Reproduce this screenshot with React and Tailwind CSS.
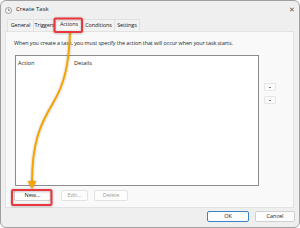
import React from "react";

const font = { fontFamily: '"Open Sans", "Noto Sans", sans-serif' };

function Btn({ children, className = "", disabled = false }) {
  return (
    <div
      className={`flex items-center justify-center h-[11px] rounded-[2px] border bg-[#fdfdfd] text-[5.5px] leading-none ${
        disabled ? "border-[#e2e2e2] text-[#a0a0a0]" : "border-[#d0d0d0] text-[#1a1a1a]"
      } ${className}`}
    >
      {children}
    </div>
  );
}

export default function App() {
  return (
    <div className="w-[300px] h-[228px] bg-white" style={font}>
      <div className="relative w-[300px] h-[228px] rounded-[6px] border border-[#a0a0a0] bg-[#efefef] flex flex-col overflow-hidden">
        {/* Title bar */}
        <div className="h-[17px] flex items-center pl-[4px] pr-[4px] shrink-0">
          <svg width="7" height="7" viewBox="0 0 10 10" className="mt-[1px]">
            <circle cx="5" cy="5" r="4.3" fill="#f4f4f4" stroke="#707070" strokeWidth="0.9" />
            <path d="M5 2.4 V5 H7" stroke="#505050" strokeWidth="0.9" fill="none" />
          </svg>
          <span className="ml-[4px] text-[6px] text-[#222]">Create Task</span>
          <span className="ml-auto text-[7px] text-[#555] leading-none">✕</span>
        </div>
        {/* Tabs */}
        <div className="h-[13px] flex items-end pl-[6px] text-[5.5px] text-[#222] shrink-0 tracking-[-0.1px]">
          <div className="w-[27px] h-[12px] flex items-center justify-center border-t border-l border-r border-[#e0e0e0] bg-[#f2f2f2]">General</div>
          <div className="w-[22px] h-[12px] flex items-center justify-center border-t border-r border-[#e0e0e0] bg-[#f2f2f2]">Triggers</div>
          <div className="w-[26px] h-[13px] flex items-center justify-center bg-[#f9f9f9]">Actions</div>
          <div className="w-[33px] h-[12px] flex items-center justify-center border-t border-l border-r border-[#e0e0e0] bg-[#f2f2f2]">Conditions</div>
          <div className="w-[25px] h-[12px] flex items-center justify-center border-t border-r border-[#e0e0e0] bg-[#f2f2f2]">Settings</div>
        </div>
        {/* Panel */}
        <div className="ml-[4px] mr-[5px] h-[177px] bg-[#f9f9f9] border border-[#e2e2e2] flex flex-col pl-[8px] pr-[6px] shrink-0">
          <div className="h-[23px] flex items-center text-[5.4px] text-[#222] tracking-[-0.05px]">
            When you create a task, you must specify the action that will occur when your task starts.
          </div>
          <div className="flex">
            <div className="ml-[1px] w-[244px] h-[131px] bg-white border border-[#8c8c8c] text-[5.6px] text-[#222]">
              <div className="flex pt-[3px]">
                <span className="pl-[2px] w-[58px]">Action</span>
                <span>Details</span>
              </div>
            </div>
            <div className="ml-[5px] pt-[28px] flex flex-col gap-[5px]">
              <div className="w-[12px] h-[8px] rounded-[1px] border border-[#e6e6e6] bg-[#fbfbfb] flex items-center justify-center">
                <div className="w-[2px] h-[1px] bg-[#777]" />
              </div>
              <div className="w-[12px] h-[8px] rounded-[1px] border border-[#e6e6e6] bg-[#fbfbfb] flex items-center justify-center">
                <div className="w-[2px] h-[1px] bg-[#777]" />
              </div>
            </div>
          </div>
          <div className="flex mt-[4px] ml-[0px]">
            <Btn className="w-[37px]">New...</Btn>
            <Btn disabled className="w-[27px] ml-[10px]">Edit...</Btn>
            <Btn disabled className="w-[34px] ml-[6px]">Delete</Btn>
          </div>
        </div>
        {/* Bottom buttons */}
        <div className="flex justify-end gap-[6px] pr-[4px] pt-[3px]">
          <Btn className="w-[42px] !border-[#3b82c4]">OK</Btn>
          <Btn className="w-[40px]">Cancel</Btn>
        </div>

        {/* Annotation overlay */}
        <svg className="absolute left-0 top-0 pointer-events-none" width="300" height="228" viewBox="0 0 300 228">
          <defs>
            <filter id="sh" x="-20%" y="-20%" width="140%" height="140%">
              <feDropShadow dx="0" dy="0.5" stdDeviation="0.8" floodColor="#000" floodOpacity="0.3" />
            </filter>
          </defs>
          <path
            d="M69 31 C 68 62, 64 82, 52 102 C 40 122, 31 140, 31 182"
            stroke="#f5a300"
            strokeWidth="2"
            fill="none"
            strokeLinecap="round"
            filter="url(#sh)"
          />
          <path d="M26.5 180 L35.5 180 L31 188 Z" fill="#f5a300" filter="url(#sh)" />
          <rect x="53.5" y="17.5" width="27.5" height="13.5" rx="1" fill="none" stroke="#e8393d" strokeWidth="2" filter="url(#sh)" />
          <rect x="11" y="189" width="39.5" height="15" rx="1" fill="none" stroke="#e8393d" strokeWidth="2" filter="url(#sh)" />
        </svg>
      </div>
    </div>
  );
}
